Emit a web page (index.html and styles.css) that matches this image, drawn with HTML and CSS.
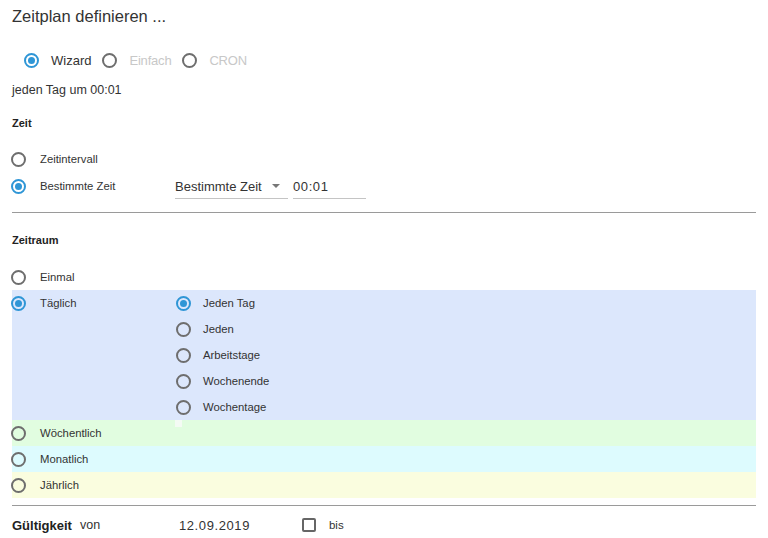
FILE: index.html
```html
<!DOCTYPE html>
<html lang="de">
<head>
<meta charset="utf-8">
<title>Zeitplan definieren</title>
<link rel="stylesheet" href="styles.css">
</head>
<body>
<div class="page">
  <h1 class="title">Zeitplan definieren ...</h1>

  <div class="modes">
    <span class="radio checked"></span><span class="mode-label">Wizard</span>
    <span class="radio"></span><span class="mode-label disabled">Einfach</span>
    <span class="radio"></span><span class="mode-label disabled">CRON</span>
  </div>

  <div class="summary">jeden Tag um 00:01</div>

  <div class="section-label label-zeit">Zeit</div>
  <div class="rows rows-zeit">
    <div class="row"><span class="radio"></span><span class="label">Zeitintervall</span></div>
    <div class="row">
      <span class="radio checked"></span><span class="label col-left">Bestimmte Zeit</span>
      <div class="select"><span>Bestimmte Zeit</span><span class="arrow"></span></div>
      <div class="time-input">00:01</div>
    </div>
  </div>

  <hr class="divider divider-1">

  <div class="section-label label-zeitraum">Zeitraum</div>
  <div class="rows rows-zeitraum">
    <div class="row"><span class="radio"></span><span class="label">Einmal</span></div>
    <div class="block block-blue">
      <div class="row daily-left"><span class="radio checked"></span><span class="label">Täglich</span></div>
      <div class="sub-list">
        <div class="row"><span class="radio checked"></span><span class="label">Jeden Tag</span></div>
        <div class="row"><span class="radio"></span><span class="label">Jeden</span></div>
        <div class="row"><span class="radio"></span><span class="label">Arbeitstage</span></div>
        <div class="row"><span class="radio"></span><span class="label">Wochenende</span></div>
        <div class="row"><span class="radio"></span><span class="label">Wochentage</span></div>
      </div>
    </div>
    <div class="row block-green"><span class="radio"></span><span class="label">Wöchentlich</span><span class="speck"></span></div>
    <div class="row block-cyan"><span class="radio"></span><span class="label">Monatlich</span></div>
    <div class="row block-yellow"><span class="radio"></span><span class="label">Jährlich</span></div>
  </div>

  <hr class="divider divider-2">

  <div class="validity">
    <span class="validity-title">Gültigkeit</span>
    <span class="validity-von">von</span>
    <span class="validity-date">12.09.2019</span>
    <span class="checkbox"></span>
    <span class="validity-bis">bis</span>
  </div>
</div>
</body>
</html>
```

FILE: styles.css
```css
html, body {
  margin: 0;
  padding: 0;
  background: #ffffff;
}

body {
  font-family: "Liberation Sans", Arial, sans-serif;
  color: #333333;
}

.page {
  padding: 0 12px;
  width: 744px;
}

.title {
  margin: 0;
  padding-top: 6px;
  font-size: 16.5px;
  font-weight: normal;
  line-height: 20px;
  color: #333333;
}

.modes {
  margin-top: 24px;
  height: 20px;
  display: flex;
  align-items: center;
  padding-left: 12px;
}

.mode-label {
  font-size: 13px;
  margin-left: 12px;
  margin-right: 11px;
  color: #333333;
}

.mode-label.disabled {
  color: #c8c8c8;
  letter-spacing: -0.2px;
}

.radio {
  box-sizing: border-box;
  width: 15px;
  height: 15px;
  border: 2px solid #6e6e6e;
  border-radius: 50%;
  flex: none;
  display: inline-flex;
  align-items: center;
  justify-content: center;
}

.radio.checked {
  border-color: #2f96d6;
}

.radio.checked::after {
  content: "";
  width: 7px;
  height: 7px;
  border-radius: 50%;
  background: #2f96d6;
}

.summary {
  margin-top: 10px;
  font-size: 12.5px;
  line-height: 20px;
}

.section-label {
  font-size: 11px;
  font-weight: bold;
  line-height: 16px;
  color: #222222;
}

.label-zeit {
  margin-top: 15px;
}

.rows-zeit {
  margin-top: 15px;
  display: flex;
  flex-direction: column;
  gap: 1px;
}

.row {
  height: 26px;
  display: flex;
  align-items: center;
  position: relative;
}

.row > .radio {
  margin-left: -1px;
}

.label {
  font-size: 11.3px;
  margin-left: 14px;
  color: #333333;
}

.col-left {
  width: 135px;
}

.select {
  margin-left: 0;
  width: 113px;
  height: 25px;
  box-sizing: border-box;
  border-bottom: 1px solid #c4c4c4;
  display: flex;
  align-items: center;
  justify-content: space-between;
  font-size: 13px;
  color: #333333;
  margin-top: 1px;
}

.arrow {
  width: 0;
  height: 0;
  border-left: 4px solid transparent;
  border-right: 4px solid transparent;
  border-top: 4px solid #777777;
  margin-right: 8px;
}

.time-input {
  margin-left: 5px;
  width: 73px;
  height: 25px;
  box-sizing: border-box;
  border-bottom: 1px solid #c4c4c4;
  display: flex;
  align-items: center;
  font-size: 13px;
  letter-spacing: 0.6px;
  color: #333333;
  margin-top: 1px;
}

.divider {
  margin: 0;
  border: none;
  border-top: 1px solid #9a9a9a;
  height: 0;
}

.divider-1 {
  margin-top: 13px;
}

.label-zeitraum {
  margin-top: 19px;
}

.rows-zeitraum {
  margin-top: 16px;
  display: flex;
  flex-direction: column;
}

.block {
  display: flex;
  align-items: flex-start;
}

.block-blue {
  background: #dce7fc;
}

.daily-left {
  width: 164px;
}

.sub-list {
  display: flex;
  flex-direction: column;
}

.sub-list .radio {
  margin-left: 0;
}

.sub-list .label {
  margin-left: 12px;
}

.block-green {
  background: #e1fde0;
}

.block-cyan {
  background: #ddfbfe;
}

.block-yellow {
  background: #fafddf;
}

.speck {
  position: absolute;
  left: 163px;
  top: 0;
  width: 7px;
  height: 7px;
  background: #f4fbf4;
}

.divider-2 {
  margin-top: 7px;
}

.validity {
  margin-top: 9px;
  height: 20px;
  display: flex;
  align-items: center;
}

.validity-title {
  font-size: 13px;
  font-weight: bold;
  color: #222222;
}

.validity-von {
  font-size: 12.5px;
  margin-left: 8px;
  width: 99px;
}

.validity-date {
  font-size: 13px;
  letter-spacing: 0.6px;
  width: 123px;
}

.checkbox {
  box-sizing: border-box;
  width: 14px;
  height: 14px;
  border: 2px solid #666666;
  border-radius: 2px;
  flex: none;
}

.validity-bis {
  font-size: 11.5px;
  margin-left: 13px;
}
```
